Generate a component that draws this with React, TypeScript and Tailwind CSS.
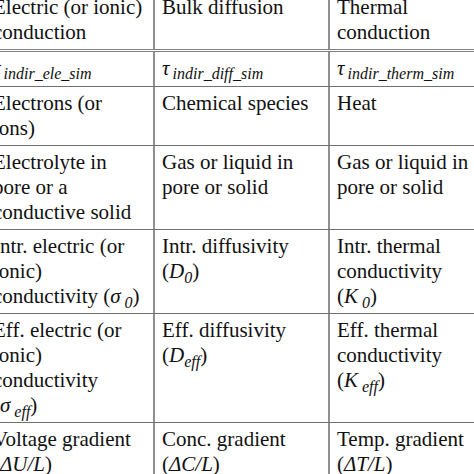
import { ReactNode } from 'react';

type Cell = ReactNode;

function Sub({ children, gap = false }: { children: ReactNode; gap?: boolean }) {
  return (
    <sub className={`text-[16px] italic align-baseline relative top-[5px] ${gap ? 'ml-[4px]' : ''}`}>
      {children}
    </sub>
  );
}

function Tau({ name }: { name: string }) {
  return (
    <span className="italic">
      τ<span className="text-[16px] relative top-[4px] ml-[3px]">{name}</span>
    </span>
  );
}

const rows: { cells: Cell[]; header?: boolean }[] = [
  {
    header: true,
    cells: [
      <>Electric (or ionic)<br />conduction</>,
      <>Bulk diffusion</>,
      <>Thermal<br />conduction</>,
    ],
  },
  {
    cells: [
      <Tau name="indir_ele_sim" />,
      <Tau name="indir_diff_sim" />,
      <Tau name="indir_therm_sim" />,
    ],
  },
  {
    cells: [
      <>Electrons (or<br />ions)</>,
      <>Chemical species</>,
      <>Heat</>,
    ],
  },
  {
    cells: [
      <>Electrolyte in<br />pore or a<br />conductive solid</>,
      <>Gas or liquid in<br />pore or solid</>,
      <>Gas or liquid in<br />pore or solid</>,
    ],
  },
  {
    cells: [
      <>Intr. electric (or<br />ionic)<br />conductivity (<i>σ</i><Sub gap>0</Sub>)</>,
      <>Intr. diffusivity<br />(<i>D</i><Sub>0</Sub>)</>,
      <>Intr. thermal<br />conductivity<br />(<i>K</i><Sub gap>0</Sub>)</>,
    ],
  },
  {
    cells: [
      <>Eff. electric (or<br />ionic)<br />conductivity<br />(<i>σ</i><Sub gap>eff</Sub>)</>,
      <>Eff. diffusivity<br />(<i>D</i><Sub>eff</Sub>)</>,
      <>Eff. thermal<br />conductivity<br />(<i>K</i><Sub gap>eff</Sub>)</>,
    ],
  },
  {
    cells: [
      <>Voltage gradient<br />(<i>ΔU/L</i>)</>,
      <>Conc. gradient<br />(<i>ΔC/L</i>)</>,
      <>Temp. gradient<br />(<i>ΔT/L</i>)</>,
    ],
  },
];

const widths = ['w-[169px]', 'w-[175px]', 'w-[175px]'];

export default function App() {
  return (
    <div className="w-[474px] h-[474px] overflow-hidden bg-white">
      <div
        className="ml-[-14px] mt-[-9px] w-[519px] text-[21px] leading-[25px] text-[#111111]"
        style={{ fontFamily: '"Liberation Serif", "Times New Roman", serif' }}
      >
        {rows.map((row, r) => (
          <div
            key={r}
            className={`flex ${row.header ? 'border-b-[3px] border-double border-[#808080]' : 'border-b border-[#707070]'}`}
          >
            {row.cells.map((cell, c) => (
              <div
                key={c}
                className={`${widths[c]} shrink-0 px-[7px] py-[4px] whitespace-nowrap ${c < 2 ? 'border-r-2 border-[#8f8f8f]' : ''}`}
              >
                {cell}
              </div>
            ))}
          </div>
        ))}
      </div>
    </div>
  );
}
